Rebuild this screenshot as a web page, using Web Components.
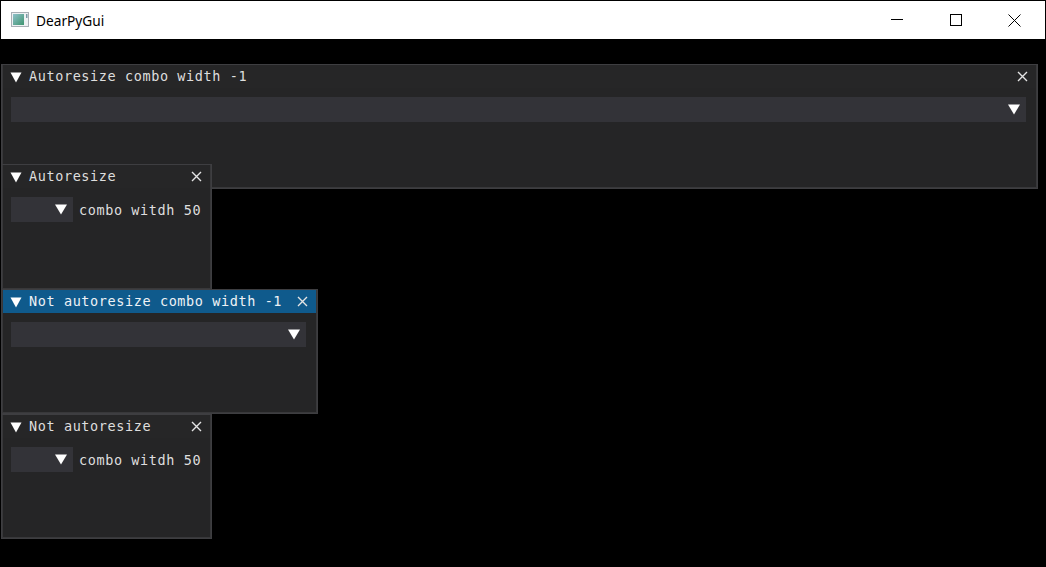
<!DOCTYPE html>
<html><head><meta charset="utf-8"><title>DearPyGui</title>
<style>
html,body{margin:0;height:100%;background:#000;overflow:hidden}
body{font-family:"Liberation Sans",sans-serif}
</style></head><body>
<template id="t-app"><style>
:host{display:flex;flex-direction:column;width:1046px;height:567px;box-sizing:border-box;padding:1px 1px 0;background:#000}
.canvas{flex:1;position:relative;background:#000}
</style><slot name="bar"></slot><div class="canvas"><slot></slot></div></template>

<template id="t-bar"><style>
:host{display:flex;align-items:center;height:38px;background:#fff;color:#000;flex:none}
.ico{margin-left:10px;margin-right:7px;width:18px;height:18px;display:block;flex:none;position:relative;top:0}
.t{flex:1;font-family:"Noto Sans",sans-serif;font-size:13.7px}
.b{width:59px;height:38px;display:flex;align-items:center;justify-content:center;flex:none}
svg{display:block}
</style>
<svg class="ico" viewBox="0 0 18 18"><rect x=".5" y="1.5" width="17" height="14" fill="#eef1f3" stroke="#a9afb5"/><defs><linearGradient id="g" x1="0" y1="0" x2="1" y2="1"><stop offset="0" stop-color="#8fc0c9"/><stop offset="1" stop-color="#3f9570"/></linearGradient></defs><rect x="2" y="3" width="11" height="11" fill="url(#g)"/><rect x="15" y="3" width="1.5" height="4" fill="#7b9aa5"/></svg>
<span class="t"><slot></slot></span>
<div class="b"><svg width="12" height="12" viewBox="0 0 12 12"><path d="M0 5.5H12" stroke="#000"/></svg></div>
<div class="b"><svg width="12" height="12" viewBox="0 0 12 12"><rect x=".5" y=".5" width="11" height="11" fill="none" stroke="#000"/></svg></div>
<div class="b" style="margin-right:1px"><svg width="13" height="13" viewBox="0 0 13 13"><path d="M.5 .5L12.5 12.5M12.5 .5L.5 12.5" stroke="#000" fill="none"/></svg></div>
</template>

<template id="t-win"><style>
:host{position:absolute;display:flex;flex-direction:column;box-sizing:border-box;background:#252526;border:1px solid #3e3e41;box-shadow:inset 0 0 0 1px #38383a;color:#dedede;font-family:"DejaVu Sans Mono","Liberation Mono",monospace;font-size:13.5px;letter-spacing:.6px}
.title{display:flex;align-items:center;height:23px;padding:0 8px 0 8px;flex:none;background:#262627;white-space:pre;margin:0 1px}
:host([active]) .title{background:#0f5a8c;color:#eef2f6}
.title svg{display:block;flex:none}
.tri{position:relative;top:1px;left:-1px}
.name{flex:1;margin-left:6px;line-height:23px}
.body{flex:1;padding:9px 11px 0 9px}
</style>
<div class="title"><svg class="tri" width="12" height="11" viewBox="0 0 12 11"><path d="M.5 .5H11.5L6 10.5Z" fill="#fff"/></svg><span class="name"></span><svg class="close" width="11" height="11" viewBox="0 0 11 11"><path d="M1 1L10 10M10 1L1 10" stroke="#e4e4e4" stroke-width="1.4" fill="none"/></svg></div>
<div class="body"><slot></slot></div></template>

<template id="t-row"><style>
:host{display:flex;align-items:center;gap:6px;height:25px;white-space:pre}
</style><slot></slot></template>

<template id="t-combo"><style>
:host{display:flex;align-items:center;justify-content:flex-end;height:25px;box-sizing:border-box;background:#333338;padding-right:6px;flex:none}
svg{display:block}
</style><svg width="12" height="11" viewBox="0 0 12 11"><path d="M0 .5H12L6 10.5Z" fill="#fff"/></svg></template>

<script>
function def(name,tid,extra){
  customElements.define(name,class extends HTMLElement{
    constructor(){super();this.attachShadow({mode:'open'}).appendChild(document.getElementById(tid).content.cloneNode(true));}
    connectedCallback(){if(extra)extra(this);}
  });
}
def('dpg-app','t-app');
def('dpg-titlebar','t-bar');
def('dpg-row','t-row');
def('dpg-combo','t-combo',e=>{const w=e.getAttribute('width');e.style.width=w?w+'px':'100%';});
def('dpg-window','t-win',e=>{
  e.shadowRoot.querySelector('.name').textContent=e.getAttribute('name');
  const [x,y,w,h]=e.getAttribute('box').split(',');
  Object.assign(e.style,{left:x+'px',top:y+'px',width:w+'px',height:h+'px'});
});
</script>
<dpg-app>
  <dpg-titlebar slot="bar">DearPyGui</dpg-titlebar>
  <dpg-window name="Autoresize combo width -1" box="0,25,1037,125"><dpg-row><dpg-combo></dpg-combo></dpg-row></dpg-window>
  <dpg-window name="Autoresize" box="0,125,211,126"><dpg-row><dpg-combo width="62"></dpg-combo><span>combo witdh 50</span></dpg-row></dpg-window>
  <dpg-window name="Not autoresize combo width -1" box="0,250,317,125" active><dpg-row><dpg-combo></dpg-combo></dpg-row></dpg-window>
  <dpg-window name="Not autoresize" box="0,375,211,125"><dpg-row><dpg-combo width="62"></dpg-combo><span>combo witdh 50</span></dpg-row></dpg-window>
</dpg-app>
</body></html>
